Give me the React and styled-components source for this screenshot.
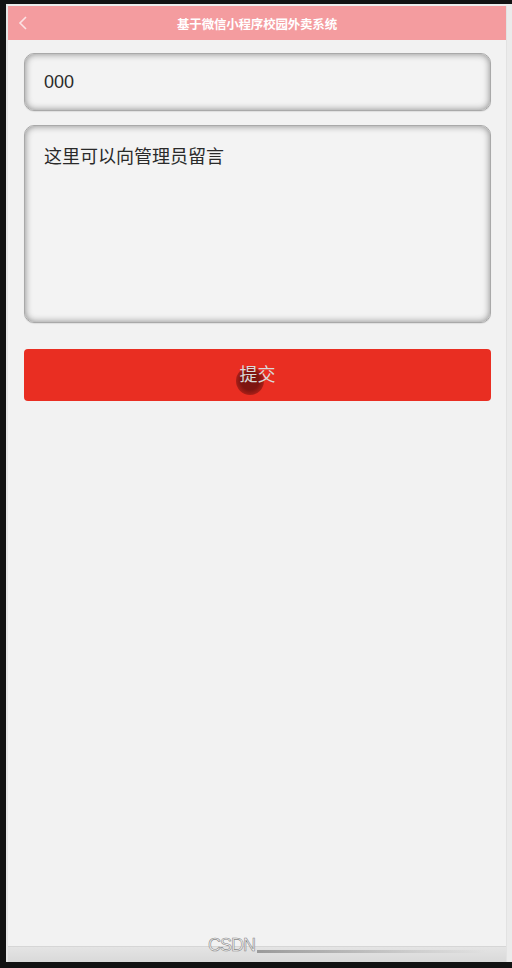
import React from "react";
import styled, { createGlobalStyle } from "styled-components";

const Global = createGlobalStyle`
  html, body { margin: 0; padding: 0; background: #111; }
  * { box-sizing: border-box; }
`;

const Screen = styled.div`
  width: 512px;
  height: 968px;
  background: #121212;
  padding: 4px 0 6px 6px;
  display: flex;
  position: relative;
`;

const Device = styled.div`
  flex: 1;
  display: flex;
  border-top: 2px solid #ececec;
  border-left: 2px solid #e6e6e6;
  background: #f2f2f2;
`;

const Main = styled.div`
  width: 498px;
  display: flex;
  flex-direction: column;
`;

const RightStrip = styled.div`
  flex: 1;
  background: #ebebeb;
  border-left: 1px solid #e2e2e2;
`;

const Header = styled.div`
  height: 34px;
  background: #f49c9f;
  display: flex;
  align-items: center;
  justify-content: center;
  position: relative;
`;

const Back = styled.svg`
  position: absolute;
  left: 10px;
  top: 10px;
`;

const Title = styled.div`
  color: #fff;
  font-family: "Noto Sans CJK SC", "Liberation Sans", sans-serif;
  font-weight: 700;
  font-size: 12.5px;
  letter-spacing: -0.2px;
`;

const Content = styled.div`
  flex: 1;
  padding: 13px 15px 0 16px;
  display: flex;
  flex-direction: column;
`;

const fieldStyle = `
  width: 100%;
  border: 1px solid #a9a9a9;
  border-radius: 10px;
  background: #f3f3f3;
  box-shadow: inset 0 0 7px rgba(0,0,0,0.45), 0 1px 1px rgba(0,0,0,0.08);
  font-family: "Liberation Sans", "Noto Sans CJK SC", sans-serif;
  font-size: 18px;
  color: #2a2a2a;
  outline: none;
  padding-left: 19px;
`;

const Input = styled.input`
  ${fieldStyle}
  height: 58px;
`;

const TextArea = styled.textarea`
  ${fieldStyle}
  height: 198px;
  margin-top: 14px;
  resize: none;
  line-height: 24px;
  padding-top: 17px;
  font-family: "Noto Sans CJK SC", "Liberation Sans", sans-serif;
`;

const Submit = styled.button`
  position: relative;
  margin-top: 26px;
  height: 52px;
  width: 100%;
  border: none;
  border-radius: 4px;
  background: #e92e22;
  color: #d9d9d9;
  font-family: "Noto Sans CJK SC", "Liberation Sans", sans-serif;
  font-size: 18px;
  padding: 0 0 4px 0;
`;

const Ripple = styled.span`
  position: absolute;
  left: 212px;
  top: 18px;
  width: 28px;
  height: 28px;
  border-radius: 50%;
  background: radial-gradient(circle, #7d1410 45%, rgba(125, 20, 16, 0.6) 70%, rgba(125, 20, 16, 0) 100%);
`;

const Label = styled.span`
  position: relative;
`;

const BottomStrip = styled.div`
  height: 16px;
  background: linear-gradient(#e4e4e4, #d9d9d9);
  border-top: 1px solid #d6d6d6;
`;

const Watermark = styled.div`
  position: absolute;
  left: 208px;
  top: 935px;
  font-family: "Liberation Sans", sans-serif;
  font-size: 18px;
  letter-spacing: -1px;
  color: #f4f4f4;
  -webkit-text-stroke: 0.6px #8a8a8a;
  display: flex;
  align-items: flex-end;
  gap: 2px;
`;

const Smear = styled.span`
  width: 230px;
  height: 3px;
  margin-bottom: 3px;
  background: linear-gradient(90deg, #9a9a9a, rgba(180,180,180,0.4) 70%, rgba(200,200,200,0));
`;

export default function App() {
  return (
    <>
      <Global />
      <Screen>
        <Device>
          <Main>
            <Header>
              <Back width="10" height="14" viewBox="0 0 10 14">
                <path d="M8 1 L2 7 L8 13" fill="none" stroke="#fbe3e4" strokeWidth="1.6" />
              </Back>
              <Title>基于微信小程序校园外卖系统</Title>
            </Header>
            <Content>
              <Input readOnly value="000" />
              <TextArea readOnly value="这里可以向管理员留言" />
              <Submit>
                <Ripple />
                <Label>提交</Label>
              </Submit>
            </Content>
            <BottomStrip />
          </Main>
          <RightStrip />
        </Device>
        <Watermark>
          CSDN<Smear />
        </Watermark>
      </Screen>
    </>
  );
}
